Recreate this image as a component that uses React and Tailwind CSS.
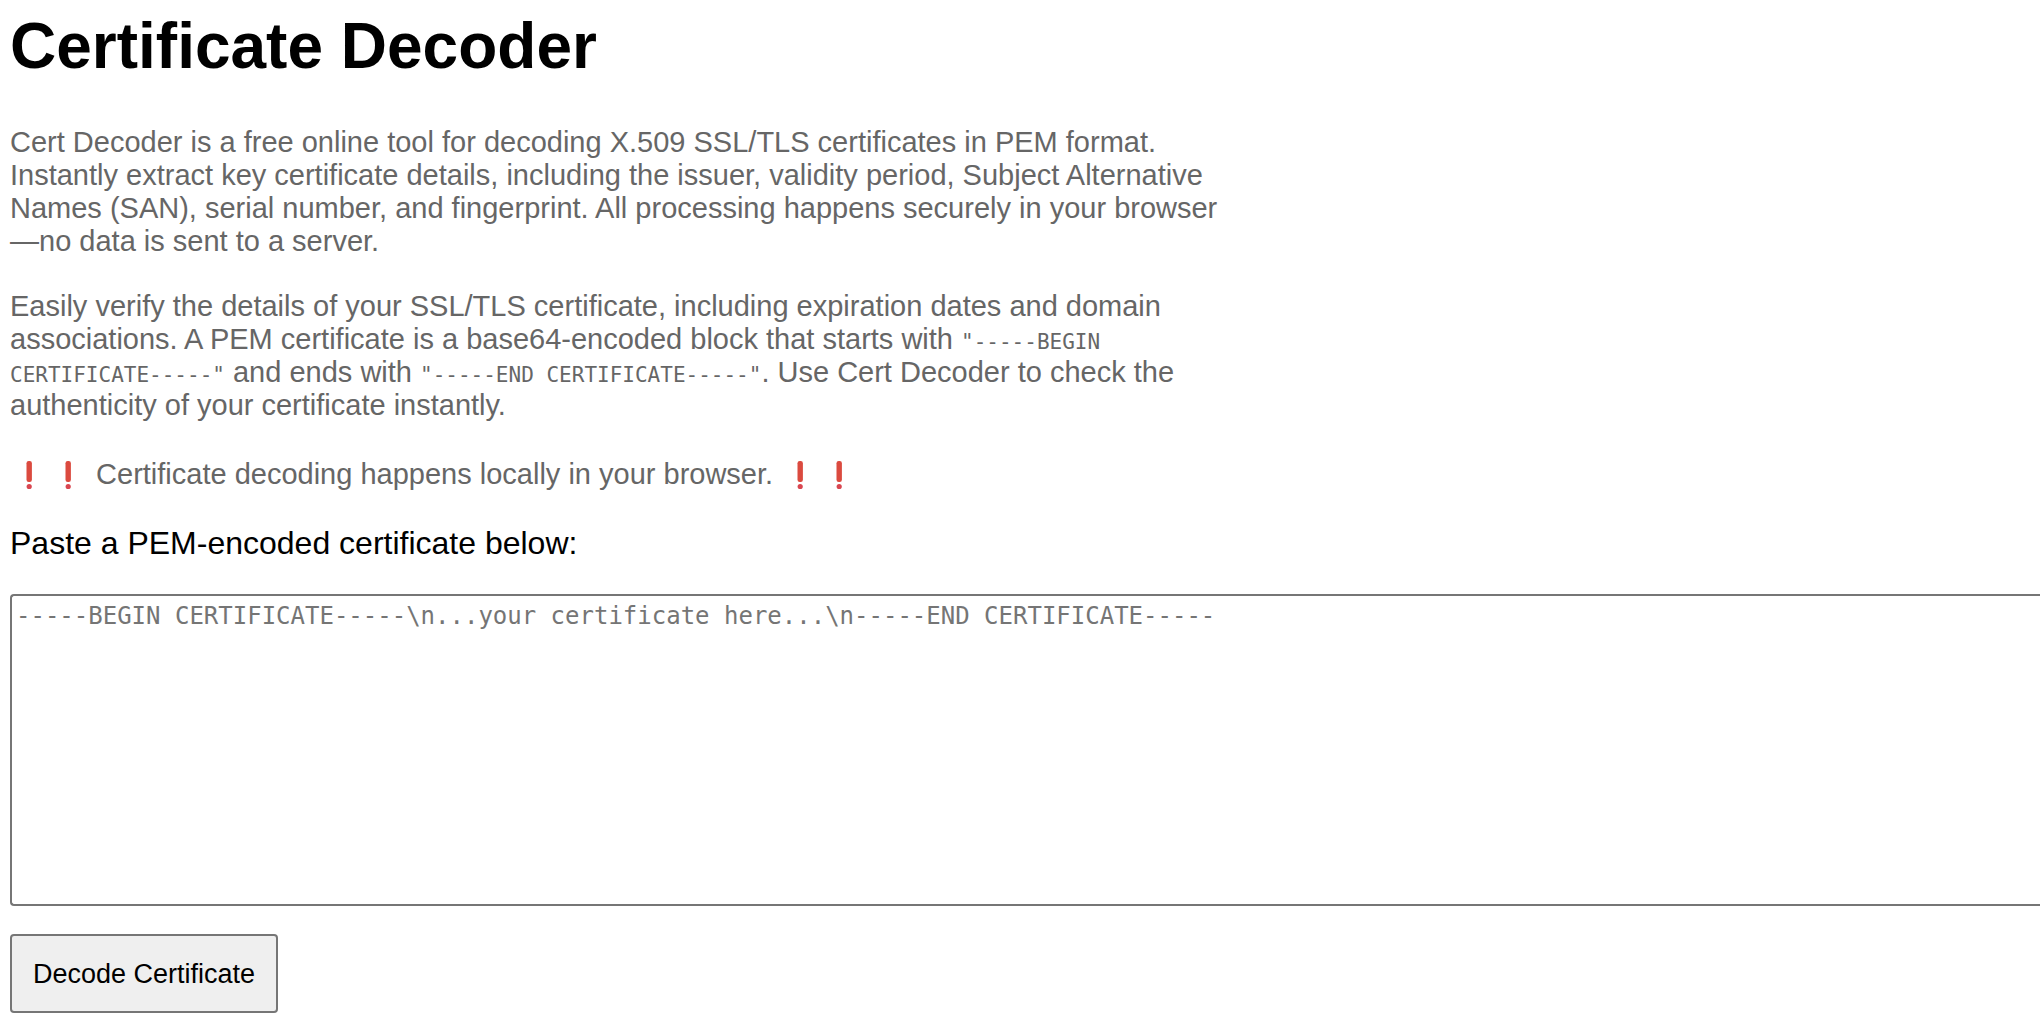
import React, { useState } from 'react';

const PLACEHOLDER =
  '-----BEGIN CERTIFICATE-----\\n...your certificate here...\\n-----END CERTIFICATE-----';

const ExclamationMark = () => (
  <svg viewBox="0 0 39 40" className="inline-block h-[40px] w-[39px] align-[-10px]" aria-hidden="true">
    <rect x="16.5" y="7" width="5.4" height="21" rx="2.2" fill="#db4a3f" />
    <circle cx="19.2" cy="32.5" r="2.6" fill="#d94650" />
  </svg>
);

const PemMarker = ({ children }) => (
  <code className="font-['DejaVu_Sans_Mono',monospace] text-[21px] leading-none">{children}</code>
);

const App = () => {
  const [pem, setPem] = useState('');

  return (
    <main className="bg-white py-[9px] pl-[10px] font-['Liberation_Sans',Arial,sans-serif] text-black">
      <h1 className="mb-[43px] text-[64px] leading-[74px] font-bold">Certificate Decoder</h1>

      <div className="max-w-[1212px] text-[29px] leading-[33px] text-[#666666]">
        <p className="mb-8">
          Cert Decoder is a free online tool for decoding X.509 SSL/TLS certificates in PEM format.
          Instantly extract key certificate details, including the issuer, validity period, Subject
          Alternative Names (SAN), serial number, and fingerprint. All processing happens securely in
          your browser—no data is sent to a server.
        </p>
        <p className="mb-8">
          Easily verify the details of your SSL/TLS certificate, including expiration dates and domain
          associations. A PEM certificate is a base64-encoded block that starts with{' '}
          <PemMarker>"-----BEGIN CERTIFICATE-----"</PemMarker> and ends with{' '}
          <PemMarker>"-----END CERTIFICATE-----"</PemMarker>. Use Cert Decoder to check the
          authenticity of your certificate instantly.
        </p>
        <p className="mb-[31px]">
          <ExclamationMark />
          <ExclamationMark /> Certificate decoding happens locally in your browser. <ExclamationMark />
          <ExclamationMark />
        </p>
      </div>

      <form onSubmit={(e) => e.preventDefault()}>
        <label htmlFor="pem" className="mb-8 block text-[32px] leading-[37px]">
          Paste a PEM-encoded certificate below:
        </label>
        <textarea
          id="pem"
          value={pem}
          onChange={(e) => setPem(e.target.value)}
          placeholder={PLACEHOLDER}
          className="mb-7 block h-[312px] w-full resize-none rounded-l-[4px] border-2 border-r-0 border-[#767676] bg-white p-1 font-['DejaVu_Sans_Mono',monospace] text-[24px] leading-[33px] placeholder:text-[#757575]"
        />
        <button
          type="submit"
          className="h-[79px] rounded-[4px] border-2 border-[#767676] bg-[#efefef] px-[21px] text-[27px] leading-[32px]"
        >
          Decode Certificate
        </button>
      </form>
    </main>
  );
};

export default App;
